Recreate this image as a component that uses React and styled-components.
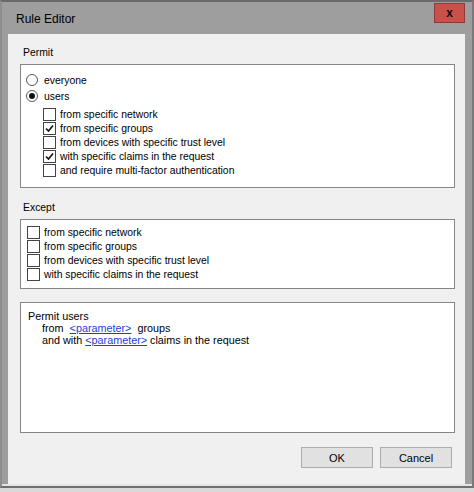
import React from 'react';
import styled, { createGlobalStyle } from 'styled-components';

const GlobalStyle = createGlobalStyle`
  html, body {
    margin: 0;
    padding: 0;
    background: #d9d9d9;
  }
  body {
    font-family: "Liberation Sans", Arial, sans-serif;
    font-size: 10.4px;
    color: #000;
  }
`;

const Window = styled.div`
  width: 474px;
  height: 488px;
  box-sizing: border-box;
  background: #9e9e9e;
  border-top: 2px solid #6a6a6a;
  border-left: 2px solid #8e8e8e;
  border-right: 2px solid #7a7a7a;
  border-bottom: 2px solid #6f6f6f;
  display: flex;
  flex-direction: column;
`;

const TitleBar = styled.div`
  height: 32px;
  display: flex;
  align-items: flex-start;
  justify-content: space-between;
  padding-left: 14px;
  padding-right: 7px;
`;

const Title = styled.span`
  font-size: 12px;
  line-height: 12px;
  margin-top: 11px;
`;

const CloseButton = styled.div`
  width: 31px;
  height: 20px;
  margin-top: 1px;
  box-sizing: border-box;
  background: #c9504b;
  border: 1px solid #8f3a36;
  display: flex;
  align-items: center;
  justify-content: center;
  font-weight: bold;
  font-size: 12px;
  color: #111;
`;

const Content = styled.div`
  margin: 0 7px 0 6px;
  flex: 1;
  background: #f0f0f0;
  padding: 12px 10px 14px 12px;
  display: flex;
  flex-direction: column;
`;

const GroupLabel = styled.div`
  line-height: 13px;
  height: 13px;
  margin-top: ${p => p.$top || 0}px;
  margin-bottom: 5px;
  padding-left: 3px;
`;

const Box = styled.div`
  background: #fff;
  border: 1px solid #868686;
  height: ${p => p.$h}px;
  box-sizing: border-box;
  padding: ${p => p.$pad};
  display: flex;
  flex-direction: column;
`;

const RadioRow = styled.div`
  height: 16px;
  display: flex;
  align-items: center;
  gap: 6px;
`;

const Radio = styled.span`
  width: 12px;
  height: 12px;
  box-sizing: border-box;
  border-radius: 50%;
  border: 1px solid #555;
  background: #fff;
  display: flex;
  align-items: center;
  justify-content: center;
  &::after {
    content: "";
    width: 6px;
    height: 6px;
    border-radius: 50%;
    background: ${p => (p.$on ? '#111' : 'transparent')};
  }
`;

const CheckList = styled.div`
  display: flex;
  flex-direction: column;
  margin-top: ${p => p.$top || 0}px;
  margin-left: ${p => p.$indent || 0}px;
`;

const CheckRow = styled.div`
  height: 14px;
  display: flex;
  align-items: center;
  gap: 4px;
`;

const CheckBoxFrame = styled.span`
  width: 13px;
  height: 13px;
  box-sizing: border-box;
  border: 1px solid #444;
  background: #fff;
  display: flex;
  align-items: center;
  justify-content: center;
`;

const Summary = styled.div`
  background: #fff;
  border: 1px solid #868686;
  margin-top: 13px;
  height: 131px;
  box-sizing: border-box;
  padding: 7px 7px;
  font-size: 10.8px;
  line-height: 12px;
`;

const SummaryLine = styled.div`
  white-space: pre;
  padding-left: ${p => p.$indent || 0}px;
`;

const Param = styled.a`
  color: #1a3fd6;
  text-decoration: underline;
`;

const ButtonRow = styled.div`
  margin-top: 14px;
  display: flex;
  justify-content: flex-end;
  gap: 7px;
  padding-right: 3px;
`;

const Button = styled.button`
  width: 72px;
  height: 21px;
  background: #e1e1e1;
  border: 1px solid #adadad;
  font-family: "Liberation Sans", Arial, sans-serif;
  font-size: 11px;
  color: #000;
  padding: 0;
`;

const BottomStrip = styled.div`
  height: 2px;
  background: #e4e4e4;
`;

const Check = ({ on }) => (
  <CheckBoxFrame>
    {on && (
      <svg width="9" height="9" viewBox="0 0 9 9">
        <polyline points="1,4.5 3.5,7 8,1.5" fill="none" stroke="#111" strokeWidth="1.6" />
      </svg>
    )}
  </CheckBoxFrame>
);

const CheckItem = ({ on, children }) => (
  <CheckRow>
    <Check on={on} />
    <span>{children}</span>
  </CheckRow>
);

export default function App() {
  return (
    <>
      <GlobalStyle />
      <Window>
        <TitleBar>
          <Title>Rule Editor</Title>
          <CloseButton>x</CloseButton>
        </TitleBar>
        <Content>
          <GroupLabel>Permit</GroupLabel>
          <Box $h={124} $pad="7px 5px">
            <RadioRow>
              <Radio />
              <span>everyone</span>
            </RadioRow>
            <RadioRow>
              <Radio $on />
              <span>users</span>
            </RadioRow>
            <CheckList $top={3} $indent={17}>
              <CheckItem>from specific network</CheckItem>
              <CheckItem on>from specific groups</CheckItem>
              <CheckItem>from devices with specific trust level</CheckItem>
              <CheckItem on>with specific claims in the request</CheckItem>
              <CheckItem>and require multi-factor authentication</CheckItem>
            </CheckList>
          </Box>
          <GroupLabel $top={13}>Except</GroupLabel>
          <Box $h={70} $pad="5px 6px">
            <CheckList>
              <CheckItem>from specific network</CheckItem>
              <CheckItem>from specific groups</CheckItem>
              <CheckItem>from devices with specific trust level</CheckItem>
              <CheckItem>with specific claims in the request</CheckItem>
            </CheckList>
          </Box>
          <Summary>
            <SummaryLine>Permit users</SummaryLine>
            <SummaryLine $indent={14}>
              from  <Param>&lt;parameter&gt;</Param>  groups
            </SummaryLine>
            <SummaryLine $indent={14}>
              and with <Param>&lt;parameter&gt;</Param> claims in the request
            </SummaryLine>
          </Summary>
          <ButtonRow>
            <Button>OK</Button>
            <Button>Cancel</Button>
          </ButtonRow>
        </Content>
        <BottomStrip />
      </Window>
    </>
  );
}
